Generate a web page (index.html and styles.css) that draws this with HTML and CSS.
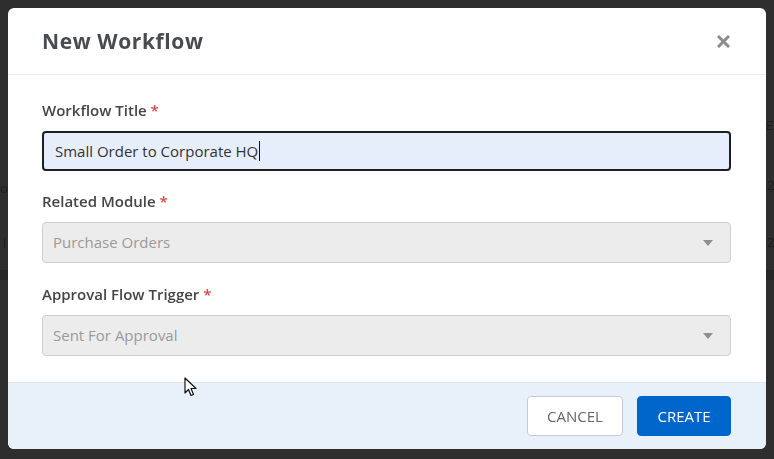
FILE: index.html
```html
<!DOCTYPE html>
<html lang="en">
<head>
  <meta charset="UTF-8">
  <title>New Workflow</title>
  <link rel="stylesheet" href="styles.css">
</head>
<body>

  <div class="backdrop">
    <span class="peek peek-left1">o</span>
    <span class="peek peek-left2">l</span>
    <span class="peek peek-right1">E</span>
    <span class="peek peek-right2">2</span>
    <span class="peek peek-right3">2</span>
  </div>

  <div class="modal">
    <div class="modal-header">
      <h2>New Workflow</h2>
      <button class="close" aria-label="Close">
        <svg width="13" height="13" viewBox="0 0 13 13">
          <path d="M2 2 L11 11 M11 2 L2 11" stroke="#8c8c8c" stroke-width="3" stroke-linecap="square"/>
        </svg>
      </button>
    </div>

    <div class="modal-body">
      <div class="field field-first">
        <label>Workflow Title <span class="req">*</span></label>
        <div class="input focused">Small Order to Corporate HQ<span class="caret"></span></div>
      </div>

      <div class="field">
        <label>Related Module <span class="req">*</span></label>
        <div class="input select">Purchase Orders<span class="arrow"></span></div>
      </div>

      <div class="field">
        <label>Approval Flow Trigger <span class="req">*</span></label>
        <div class="input select">Sent For Approval<span class="arrow"></span></div>
      </div>
    </div>

    <div class="modal-footer">
      <button class="btn btn-cancel">Cancel</button>
      <button class="btn btn-create">Create</button>
    </div>

    <svg class="pointer" width="14" height="21" viewBox="0 0 14 21">
      <path d="M1 1 L1 16 L4.5 12.5 L7 18.5 L9.5 17.5 L7 11.5 L12 11.5 Z" fill="#fff" stroke="#111" stroke-width="1.2" stroke-linejoin="round"/>
    </svg>
  </div>

</body>
</html>
```

FILE: styles.css
```css
html {
  background: #2e2e2e;
  height: 100%;
}

body {
  margin: 0;
  padding: 8px;
  font-family: 'Open Sans', 'Liberation Sans', sans-serif;
  color: #444;
}

.backdrop {
  position: fixed;
  inset: 0;
  background: linear-gradient(#2e2e2e 0, #2e2e2e 270px, #262626 270px, #262626 280px, #2e2e2e 280px);
}

.peek {
  position: absolute;
  font-size: 13px;
  color: #1c1c1c;
}
.peek-left1 { left: 0; top: 179px; }
.peek-left2 { left: 3px; top: 234px; }
.peek-right1 { left: 766px; top: 116px; }
.peek-right2 { left: 767px; top: 176px; }
.peek-right3 { left: 767px; top: 233px; }

.modal {
  position: relative;
  width: 758px;
  height: 441px;
  background: #fff;
  border-radius: 6px;
  overflow: hidden;
  display: flex;
  flex-direction: column;
}

.modal-header {
  height: 66px;
  border-bottom: 1px solid #ececec;
  display: flex;
  align-items: center;
  justify-content: space-between;
  padding: 0 36px 0 34px;
}

.modal-header h2 {
  margin: 0;
  font-family: 'Open Sans', sans-serif;
  font-weight: 700;
  font-size: 21px;
  letter-spacing: 0.6px;
  color: #484b4f;
  padding-bottom: 1px;
}

.close {
  border: 0;
  background: none;
  padding: 0;
  width: 13px;
  height: 13px;
  display: flex;
}

.modal-body {
  flex: 1;
  padding: 25px 35px 0 34px;
}

.field {
  margin-bottom: 21px;
}

.field-first {
  margin-bottom: 20px;
}

.field label {
  display: block;
  font-size: 15px;
  line-height: 20px;
  font-weight: 600;
  color: #454545;
  margin-bottom: 11px;
}

.req {
  color: #e0453f;
}

.input {
  position: relative;
  height: 41px;
  box-sizing: border-box;
  border: 1px solid #cfcfcf;
  border-radius: 4px;
  background: #ececec;
  font-size: 15px;
  line-height: 39px;
  padding: 0 10px;
  color: #9a9a9a;
}

.input.focused {
  height: 40px;
  border: 2px solid #1f1f1f;
  background: #e7eefb;
  color: #333;
  line-height: 36px;
  padding: 0 11px;
}

.caret {
  display: inline-block;
  width: 1px;
  height: 20px;
  background: #111;
  vertical-align: middle;
  margin-left: 1px;
  margin-top: -3px;
}

.arrow {
  position: absolute;
  right: 17px;
  top: 17px;
  width: 0;
  height: 0;
  border-left: 5px solid transparent;
  border-right: 5px solid transparent;
  border-top: 6px solid #8e8e8e;
}

.modal-footer {
  height: 66px;
  border-top: 1px solid #dde6f0;
  background: #e8f0fa;
  display: flex;
  align-items: center;
  justify-content: flex-end;
  gap: 14px;
  padding: 0 35px 0 0;
}

.btn {
  height: 40px;
  border-radius: 4px;
  font-family: 'Open Sans', sans-serif;
  font-size: 15px;
  text-transform: uppercase;
  padding: 0;
  cursor: pointer;
}

.btn-cancel {
  width: 96px;
  background: #fff;
  border: 1px solid #c8ccd2;
  color: #666;
}

.btn-create {
  width: 94px;
  background: #0066cc;
  border: 1px solid #0066cc;
  color: #fff;
}

.pointer {
  position: absolute;
  left: 176px;
  top: 369px;
}
```
